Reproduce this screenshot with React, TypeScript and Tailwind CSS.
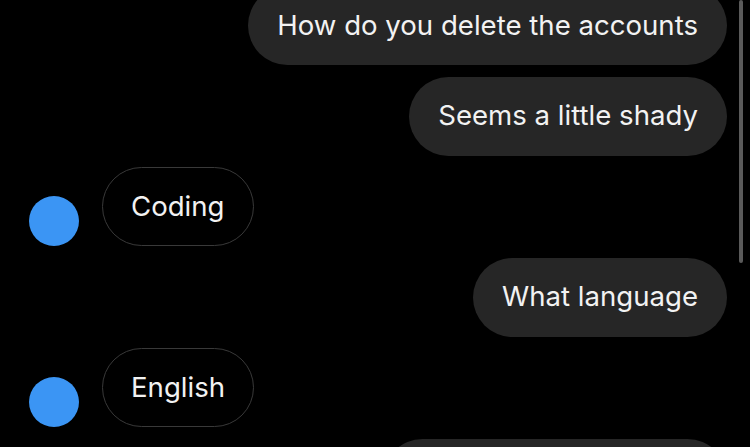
const messages: { from: 'me' | 'them'; text: string }[] = [
  { from: 'me', text: 'How do you delete the accounts' },
  { from: 'me', text: 'Seems a little shady' },
  { from: 'them', text: 'Coding' },
  { from: 'me', text: 'What language' },
  { from: 'them', text: 'English' },
];

export default function App() {
  return (
    <div className="relative h-[447px] w-[750px] overflow-hidden bg-black font-['Inter',sans-serif]">
      <div className="-mt-[14px] flex flex-col gap-[11.5px] pl-[29px] pr-[23px]">
        {messages.map((m, i) =>
          m.from === 'me' ? (
            <div key={i} className="flex justify-end">
              <div className="flex h-[79px] items-center rounded-full bg-[#262626] px-[29px] text-[27.6px] text-[#f2f2f2]">
                {m.text}
              </div>
            </div>
          ) : (
            <div key={i} className="flex items-end gap-[23px]">
              <div className="h-[50px] w-[50px] rounded-full bg-[#3b95f4]" />
              <div className="flex h-[79px] items-center rounded-full border-[1.5px] border-[#393939] px-[28px] text-[27.6px] text-[#f2f2f2]">
                {m.text}
              </div>
            </div>
          )
        )}
        {/* next message, cut off at the bottom */}
        <div className="flex justify-end">
          <div className="h-[79px] w-[344px] rounded-full bg-[#262626]" />
        </div>
      </div>
      <div className="absolute right-[7px] top-0 h-[263px] w-[4px] rounded-full bg-[#5a5a5a]" />
    </div>
  );
}
